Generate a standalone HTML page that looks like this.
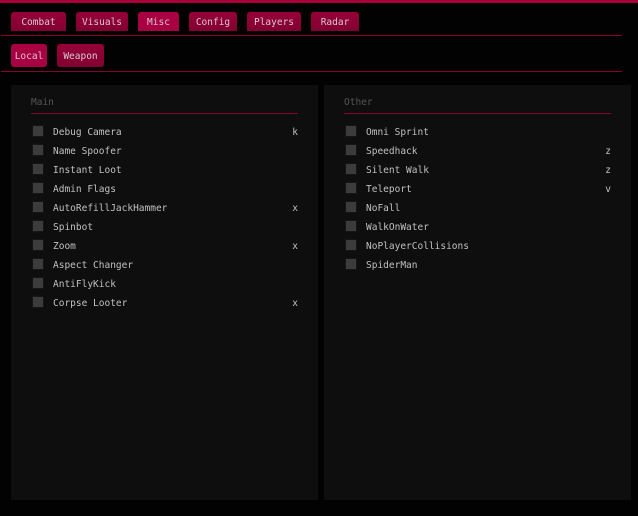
<!DOCTYPE html><html><head><style>
*{margin:0;padding:0;box-sizing:border-box}
body{width:638px;height:516px;background:#020202;position:relative;overflow:hidden;font-family:"DejaVu Sans Mono","Liberation Mono",monospace;font-size:9.5px;color:#c8c8c8}
.top{position:absolute;left:0;top:0;width:638px;height:3px;background:#a8003a}
.tab{position:absolute;height:19px;border-radius:3px 3px 0 0;background:linear-gradient(#960038,#820030);color:#d8c8d0;text-align:center;line-height:22px}
.tab.a{background:#a80042}
.line{position:absolute;left:1px;width:621px;height:1px;background:#8a0030}
.panel{position:absolute;top:85px;width:307px;height:415px;background:#0e0e0e}
.hd{position:absolute;left:20px;top:12px;color:#555}
.hl{position:absolute;left:20px;top:28px;width:267px;height:1px;background:#8a0030}
.row{position:absolute;left:22px;width:265px;height:12px}
.cb{position:absolute;left:-1px;top:-1px;width:12px;height:12px;background:#3c3c3c;border:1px solid #151515}
.lb{position:absolute;left:20px;top:1px;color:#c0c0c0}
.k{position:absolute;right:0;top:1px;color:#c0c0c0}
</style></head><body>
<div class="top"></div>
<div class="tab" style="left:11px;top:12px;width:55px">Combat</div>
<div class="tab" style="left:76px;top:12px;width:52px">Visuals</div>
<div class="tab a" style="left:138px;top:12px;width:41px">Misc</div>
<div class="tab" style="left:189px;top:12px;width:48px">Config</div>
<div class="tab" style="left:247px;top:12px;width:54px">Players</div>
<div class="tab" style="left:311px;top:12px;width:48px">Radar</div>
<div class="line" style="top:35px"></div>
<div class="tab a" style="left:11px;top:44px;width:36px;height:23px;line-height:26px;border-radius:3px">Local</div>
<div class="tab" style="left:57px;top:44px;width:47px;height:23px;line-height:26px;border-radius:3px">Weapon</div>
<div class="line" style="top:71px"></div>
<div class="panel" style="left:11px">
<div class="hd">Main</div><div class="hl"></div>
<div class="row" style="top:41px"><div class="cb"></div><div class="lb">Debug Camera</div><div class="k">k</div></div>
<div class="row" style="top:60px"><div class="cb"></div><div class="lb">Name Spoofer</div></div>
<div class="row" style="top:79px"><div class="cb"></div><div class="lb">Instant Loot</div></div>
<div class="row" style="top:98px"><div class="cb"></div><div class="lb">Admin Flags</div></div>
<div class="row" style="top:117px"><div class="cb"></div><div class="lb">AutoRefillJackHammer</div><div class="k">x</div></div>
<div class="row" style="top:136px"><div class="cb"></div><div class="lb">Spinbot</div></div>
<div class="row" style="top:155px"><div class="cb"></div><div class="lb">Zoom</div><div class="k">x</div></div>
<div class="row" style="top:174px"><div class="cb"></div><div class="lb">Aspect Changer</div></div>
<div class="row" style="top:193px"><div class="cb"></div><div class="lb">AntiFlyKick</div></div>
<div class="row" style="top:212px"><div class="cb"></div><div class="lb">Corpse Looter</div><div class="k">x</div></div>
</div>
<div class="panel" style="left:324px">
<div class="hd">Other</div><div class="hl"></div>
<div class="row" style="top:41px"><div class="cb"></div><div class="lb">Omni Sprint</div></div>
<div class="row" style="top:60px"><div class="cb"></div><div class="lb">Speedhack</div><div class="k">z</div></div>
<div class="row" style="top:79px"><div class="cb"></div><div class="lb">Silent Walk</div><div class="k">z</div></div>
<div class="row" style="top:98px"><div class="cb"></div><div class="lb">Teleport</div><div class="k">v</div></div>
<div class="row" style="top:117px"><div class="cb"></div><div class="lb">NoFall</div></div>
<div class="row" style="top:136px"><div class="cb"></div><div class="lb">WalkOnWater</div></div>
<div class="row" style="top:155px"><div class="cb"></div><div class="lb">NoPlayerCollisions</div></div>
<div class="row" style="top:174px"><div class="cb"></div><div class="lb">SpiderMan</div></div>
</div>
</body></html>
